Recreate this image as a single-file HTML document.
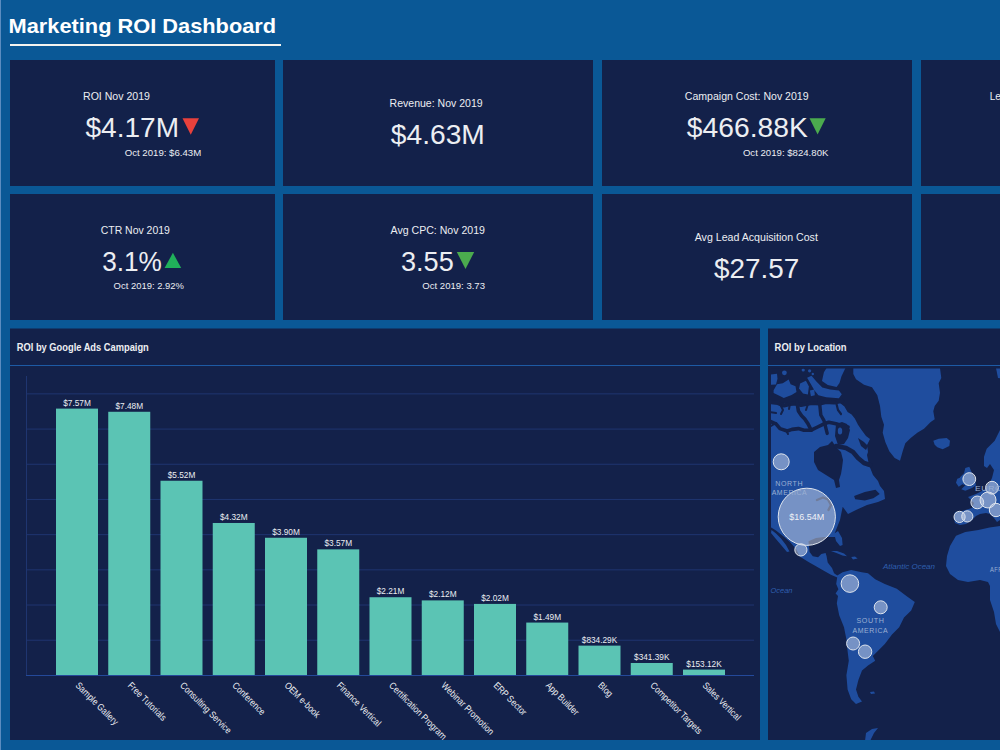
<!DOCTYPE html>
<html><head><meta charset="utf-8"><style>
html,body{margin:0;padding:0;background:#0a5896;width:1000px;height:750px;overflow:hidden}
svg{display:block}
text{font-family:"Liberation Sans",sans-serif}
</style></head><body>
<svg width="1000" height="750" viewBox="0 0 1000 750">
<rect x="0" y="0" width="1000" height="750" fill="#0a5896"/>
<rect x="0" y="0" width="1" height="750" fill="#5b8cc0"/>
<text x="8.6" y="33" font-size="21" textLength="267.5" lengthAdjust="spacingAndGlyphs" font-weight="bold" fill="#ffffff">Marketing ROI Dashboard</text>
<rect x="10" y="44" width="271" height="2" fill="#f4f4f0"/>
<rect x="10" y="60" width="265" height="126" fill="#13214a"/>
<rect x="283" y="60" width="310" height="126" fill="#13214a"/>
<rect x="602" y="60" width="310" height="126" fill="#13214a"/>
<rect x="921" y="60" width="89" height="126" fill="#13214a"/>
<rect x="10" y="194" width="265" height="126" fill="#13214a"/>
<rect x="283" y="194" width="310" height="126" fill="#13214a"/>
<rect x="602" y="194" width="310" height="126" fill="#13214a"/>
<rect x="921" y="194" width="89" height="126" fill="#13214a"/>
<rect x="10" y="328.5" width="750" height="411.5" fill="#13214a"/>
<rect x="768" y="328.5" width="240" height="411.5" fill="#13214a"/>
<text x="83" y="99.8" font-size="10" textLength="67" lengthAdjust="spacingAndGlyphs" fill="#eceef2">ROI Nov 2019</text>
<text x="85.5" y="137.3" font-size="28.5" textLength="93.5" lengthAdjust="spacingAndGlyphs" fill="#eceef2">$4.17M</text>
<polygon points="182.5,118.3 199.0,118.3 190.75,134.8" fill="#e8413c"/>
<text x="124.7" y="155.7" font-size="9.6" textLength="76.5" lengthAdjust="spacingAndGlyphs" fill="#eceef2">Oct 2019: $6.43M</text>
<text x="389.6" y="107" font-size="10" textLength="93" lengthAdjust="spacingAndGlyphs" fill="#eceef2">Revenue: Nov 2019</text>
<text x="390.8" y="143.8" font-size="28.5" textLength="94" lengthAdjust="spacingAndGlyphs" fill="#eceef2">$4.63M</text>
<text x="684.8" y="99.8" font-size="10" textLength="123.8" lengthAdjust="spacingAndGlyphs" fill="#eceef2">Campaign Cost: Nov 2019</text>
<text x="686.8" y="136.7" font-size="28.5" textLength="121" lengthAdjust="spacingAndGlyphs" fill="#eceef2">$466.88K</text>
<polygon points="809.5,118.3 825.7,118.3 817.6,134.5" fill="#4bab4e"/>
<text x="742.9" y="155.6" font-size="9.6" textLength="85.5" lengthAdjust="spacingAndGlyphs" fill="#eceef2">Oct 2019: $824.80K</text>
<text x="989.8" y="100.2" font-size="10" fill="#eceef2">Lead</text>
<text x="100.7" y="233.6" font-size="10" textLength="69.2" lengthAdjust="spacingAndGlyphs" fill="#eceef2">CTR Nov 2019</text>
<text x="102.2" y="271.3" font-size="28.5" textLength="59.7" lengthAdjust="spacingAndGlyphs" fill="#eceef2">3.1%</text>
<polygon points="164.6,268.0 181.2,268.0 172.9,252.8" fill="#20b05a"/>
<text x="113.6" y="289.2" font-size="9.6" textLength="70.3" lengthAdjust="spacingAndGlyphs" fill="#eceef2">Oct 2019: 2.92%</text>
<text x="390.6" y="234" font-size="10" textLength="94.4" lengthAdjust="spacingAndGlyphs" fill="#eceef2">Avg CPC: Nov 2019</text>
<text x="401" y="271.2" font-size="28.5" textLength="52.8" lengthAdjust="spacingAndGlyphs" fill="#eceef2">3.55</text>
<polygon points="456.8,252 474.2,252 465.5,269" fill="#4bab4e"/>
<text x="422.3" y="289.4" font-size="9.6" textLength="62.7" lengthAdjust="spacingAndGlyphs" fill="#eceef2">Oct 2019: 3.73</text>
<text x="694.7" y="241.1" font-size="10" textLength="123.2" lengthAdjust="spacingAndGlyphs" fill="#eceef2">Avg Lead Acquisition Cost</text>
<text x="714" y="277.9" font-size="28.5" textLength="85.2" lengthAdjust="spacingAndGlyphs" fill="#eceef2">$27.57</text>
<text x="16.8" y="351" font-size="10.5" textLength="132" lengthAdjust="spacingAndGlyphs" font-weight="bold" fill="#eceef2">ROI by Google Ads Campaign</text>
<rect x="10" y="365" width="750" height="1" fill="#1d5aa5"/>
<rect x="26" y="639.71" width="728" height="1" fill="#1f3570"/>
<rect x="26" y="604.52" width="728" height="1" fill="#1f3570"/>
<rect x="26" y="569.33" width="728" height="1" fill="#1f3570"/>
<rect x="26" y="534.14" width="728" height="1" fill="#1f3570"/>
<rect x="26" y="498.95" width="728" height="1" fill="#1f3570"/>
<rect x="26" y="463.76" width="728" height="1" fill="#1f3570"/>
<rect x="26" y="428.57" width="728" height="1" fill="#1f3570"/>
<rect x="26" y="393.38" width="728" height="1" fill="#1f3570"/>
<rect x="26" y="376" width="1" height="299" fill="#1f3570"/>
<rect x="26" y="675" width="728" height="1" fill="#24499a"/>
<rect x="56.00" y="408.61" width="42" height="266.39" fill="#5bc4b4"/>
<text x="77.00" y="405.61" font-size="9.5" textLength="27.6" lengthAdjust="spacingAndGlyphs" text-anchor="middle" fill="#eceef2">$7.57M</text>
<text transform="translate(75.00,686) rotate(45)" x="0" y="0" font-size="9.5" fill="#eceef2" textLength="55.9" lengthAdjust="spacingAndGlyphs">Sample Gallery</text>
<rect x="108.25" y="411.78" width="42" height="263.22" fill="#5bc4b4"/>
<text x="129.25" y="408.78" font-size="9.5" textLength="27.6" lengthAdjust="spacingAndGlyphs" text-anchor="middle" fill="#eceef2">$7.48M</text>
<text transform="translate(127.25,686) rotate(45)" x="0" y="0" font-size="9.5" fill="#eceef2" textLength="49.9" lengthAdjust="spacingAndGlyphs">Free Tutorials</text>
<rect x="160.50" y="480.75" width="42" height="194.25" fill="#5bc4b4"/>
<text x="181.50" y="477.75" font-size="9.5" textLength="27.6" lengthAdjust="spacingAndGlyphs" text-anchor="middle" fill="#eceef2">$5.52M</text>
<text transform="translate(179.50,686) rotate(45)" x="0" y="0" font-size="9.5" fill="#eceef2" textLength="68.1" lengthAdjust="spacingAndGlyphs">Consulting Service</text>
<rect x="212.75" y="522.98" width="42" height="152.02" fill="#5bc4b4"/>
<text x="233.75" y="519.98" font-size="9.5" textLength="27.6" lengthAdjust="spacingAndGlyphs" text-anchor="middle" fill="#eceef2">$4.32M</text>
<text transform="translate(231.75,686) rotate(45)" x="0" y="0" font-size="9.5" fill="#eceef2" textLength="42.2" lengthAdjust="spacingAndGlyphs">Conference</text>
<rect x="265.00" y="537.76" width="42" height="137.24" fill="#5bc4b4"/>
<text x="286.00" y="534.76" font-size="9.5" textLength="27.6" lengthAdjust="spacingAndGlyphs" text-anchor="middle" fill="#eceef2">$3.90M</text>
<text transform="translate(284.00,686) rotate(45)" x="0" y="0" font-size="9.5" fill="#eceef2" textLength="45.9" lengthAdjust="spacingAndGlyphs">OEM e-book</text>
<rect x="317.25" y="549.37" width="42" height="125.63" fill="#5bc4b4"/>
<text x="338.25" y="546.37" font-size="9.5" textLength="27.6" lengthAdjust="spacingAndGlyphs" text-anchor="middle" fill="#eceef2">$3.57M</text>
<text transform="translate(336.25,686) rotate(45)" x="0" y="0" font-size="9.5" fill="#eceef2" textLength="58.1" lengthAdjust="spacingAndGlyphs">Finance Vertical</text>
<rect x="369.50" y="597.23" width="42" height="77.77" fill="#5bc4b4"/>
<text x="390.50" y="594.23" font-size="9.5" textLength="27.6" lengthAdjust="spacingAndGlyphs" text-anchor="middle" fill="#eceef2">$2.21M</text>
<text transform="translate(388.50,686) rotate(45)" x="0" y="0" font-size="9.5" fill="#eceef2" textLength="76.7" lengthAdjust="spacingAndGlyphs">Certification Program</text>
<rect x="421.75" y="600.40" width="42" height="74.60" fill="#5bc4b4"/>
<text x="442.75" y="597.40" font-size="9.5" textLength="27.6" lengthAdjust="spacingAndGlyphs" text-anchor="middle" fill="#eceef2">$2.12M</text>
<text transform="translate(440.75,686) rotate(45)" x="0" y="0" font-size="9.5" fill="#eceef2" textLength="69.8" lengthAdjust="spacingAndGlyphs">Webinar Promotion</text>
<rect x="474.00" y="603.92" width="42" height="71.08" fill="#5bc4b4"/>
<text x="495.00" y="600.92" font-size="9.5" textLength="27.6" lengthAdjust="spacingAndGlyphs" text-anchor="middle" fill="#eceef2">$2.02M</text>
<text transform="translate(493.00,686) rotate(45)" x="0" y="0" font-size="9.5" fill="#eceef2" textLength="42.5" lengthAdjust="spacingAndGlyphs">ERP Sector</text>
<rect x="526.25" y="622.57" width="42" height="52.43" fill="#5bc4b4"/>
<text x="547.25" y="619.57" font-size="9.5" textLength="27.6" lengthAdjust="spacingAndGlyphs" text-anchor="middle" fill="#eceef2">$1.49M</text>
<text transform="translate(545.25,686) rotate(45)" x="0" y="0" font-size="9.5" fill="#eceef2" textLength="42.2" lengthAdjust="spacingAndGlyphs">App Builder</text>
<rect x="578.50" y="645.64" width="42" height="29.36" fill="#5bc4b4"/>
<text x="599.50" y="642.64" font-size="9.5" textLength="35.4" lengthAdjust="spacingAndGlyphs" text-anchor="middle" fill="#eceef2">$834.29K</text>
<text transform="translate(597.50,686) rotate(45)" x="0" y="0" font-size="9.5" fill="#eceef2" textLength="16.4" lengthAdjust="spacingAndGlyphs">Blog</text>
<rect x="630.75" y="662.99" width="42" height="12.01" fill="#5bc4b4"/>
<text x="651.75" y="659.99" font-size="9.5" textLength="35.4" lengthAdjust="spacingAndGlyphs" text-anchor="middle" fill="#eceef2">$341.39K</text>
<text transform="translate(649.75,686) rotate(45)" x="0" y="0" font-size="9.5" fill="#eceef2" textLength="68.9" lengthAdjust="spacingAndGlyphs">Competitor Targets</text>
<rect x="683.00" y="669.61" width="42" height="5.39" fill="#5bc4b4"/>
<text x="704.00" y="666.61" font-size="9.5" textLength="35.4" lengthAdjust="spacingAndGlyphs" text-anchor="middle" fill="#eceef2">$153.12K</text>
<text transform="translate(702.00,686) rotate(45)" x="0" y="0" font-size="9.5" fill="#eceef2" textLength="49.5" lengthAdjust="spacingAndGlyphs">Sales Vertical</text>
<text x="774.6" y="351" font-size="10.5" textLength="72" lengthAdjust="spacingAndGlyphs" font-weight="bold" fill="#eceef2">ROI by Location</text>
<rect x="768" y="365" width="240" height="1" fill="#1d5aa5"/>
<clipPath id="mc"><rect x="771" y="368.5" width="240" height="371.5"/></clipPath>
<g clip-path="url(#mc)">
<rect x="771" y="368.5" width="240" height="372" fill="#13214a"/>
<polygon points="770.0,403.0 840.0,403.0 844.4,406.4 847.6,412.0 851.6,414.4 854.8,418.4 858.0,424.8 861.2,429.6 866.0,436.0 870.0,439.0 867.0,445.0 868.0,452.0 867.0,455.0 869.0,465.0 873.0,475.0 878.0,481.0 880.0,486.0 884.0,491.0 885.0,499.0 878.0,502.0 867.0,505.0 856.0,510.0 848.0,514.0 842.7,506.7 840.0,520.0 834.7,533.3 838.0,531.0 842.0,538.0 842.6,545.0 840.0,546.0 836.0,541.0 835.0,537.0 832.0,537.1 824.5,537.1 816.0,538.1 808.5,541.3 809.6,552.0 812.8,556.2 818.1,557.3 821.3,554.1 825.6,553.0 826.6,556.2 827.7,562.6 832.0,568.0 834.1,573.3 837.3,575.4 841.6,577.6 837.3,577.5 830.9,574.8 823.4,570.5 816.0,566.3 808.5,562.0 800.0,556.7 796.0,549.0 790.0,542.0 783.0,536.0 776.0,530.5 771.2,527.5 770.0,527.5" fill="#1f4d9e"/>
<circle cx="784.4" cy="372.8" r="2.4" fill="#1f4d9e"/>
<circle cx="803.2" cy="370" r="1.6" fill="#1f4d9e"/>
<circle cx="809.6" cy="370.8" r="1.6" fill="#1f4d9e"/>
<circle cx="812.8" cy="374" r="1.2" fill="#1f4d9e"/>
<polygon points="769.2,374.8 777.0,373.8 777.5,378.7 776.0,384.5 769.2,385.0" fill="#1f4d9e"/>
<polygon points="773.6,390.2 777.0,384.3 782.8,383.3 788.7,379.4 790.6,384.3 795.5,386.3 796.5,392.1 791.6,395.0 783.8,398.0 779.9,396.0 773.6,393.1" fill="#1f4d9e"/>
<polygon points="800.1,383.6 805.9,380.7 808.9,386.6 807.9,394.4 803.0,393.4 799.1,388.5" fill="#1f4d9e"/>
<polygon points="809.9,390.4 814.3,389.4 814.8,395.2 810.9,396.2" fill="#1f4d9e"/>
<polygon points="807.1,377.7 811.5,375.7 816.4,381.6 822.3,387.4 830.1,389.4 838.9,390.4 841.8,394.3 838.9,398.2 826.2,397.2 818.4,395.2 814.5,390.4 810.5,383.5" fill="#1f4d9e"/>
<polygon points="822.0,381.1 823.9,372.3 827.8,366.0 846.4,366.0 841.5,376.2 839.5,383.1 836.6,387.0 827.8,385.0" fill="#1f4d9e"/>
<polyline points="770.0,421.4 776.0,423.8 780.0,428.6 787.2,431.0 792.0,429.4 798.4,428.6 804.0,430.2 811.2,430.2 817.6,427.0 824.0,423.8 828.8,422.2 836.0,423.8 841.6,425.4 848.0,427.0" fill="none" stroke="#13214a" stroke-width="3.6" stroke-linejoin="round" stroke-linecap="round"/>
<polyline points="770.0,402.0 778.0,403.0 784.0,405.5 790.0,404.0 796.0,403.5 801.0,405.0 806.0,404.0 812.0,403.0 820.0,403.5 826.0,402.0 834.0,402.5 842.0,401.0" fill="none" stroke="#13214a" stroke-width="4.2" stroke-linejoin="round" stroke-linecap="round"/>
<polyline points="796.8,401.0 798.4,411.0 801.6,415.8 804.8,419.0 808.0,423.8 811.2,430.2" fill="none" stroke="#13214a" stroke-width="3.6" stroke-linejoin="round" stroke-linecap="round"/>
<polyline points="819.2,399.8 820.0,407.0 820.8,415.0 824.0,420.6 825.6,427.0 827.2,433.4" fill="none" stroke="#13214a" stroke-width="3.4" stroke-linejoin="round" stroke-linecap="round"/>
<polyline points="780.0,404.0 783.0,410.0 781.0,414.0" fill="none" stroke="#13214a" stroke-width="2" stroke-linejoin="round" stroke-linecap="round"/>
<polyline points="790.0,404.0 789.0,409.0" fill="none" stroke="#13214a" stroke-width="2" stroke-linejoin="round" stroke-linecap="round"/>
<polyline points="776.0,423.0 771.0,426.0" fill="none" stroke="#13214a" stroke-width="2" stroke-linejoin="round" stroke-linecap="round"/>
<polyline points="786.0,430.0 788.0,434.0" fill="none" stroke="#13214a" stroke-width="2" stroke-linejoin="round" stroke-linecap="round"/>
<polyline points="808.0,404.0 806.0,410.0" fill="none" stroke="#13214a" stroke-width="2" stroke-linejoin="round" stroke-linecap="round"/>
<polyline points="836.0,402.0 838.0,410.0 841.0,414.0" fill="none" stroke="#13214a" stroke-width="2.2" stroke-linejoin="round" stroke-linecap="round"/>
<polyline points="770.0,412.0 776.0,413.0" fill="none" stroke="#13214a" stroke-width="2" stroke-linejoin="round" stroke-linecap="round"/>
<polygon points="836.0,424.0 842.0,422.0 847.0,424.0 850.0,430.0 848.0,438.0 844.0,444.0 838.0,445.0 835.0,436.0" fill="#13214a"/>
<ellipse cx="840" cy="431" rx="2.2" ry="3.5" fill="#1f4d9e"/>
<polygon points="814.0,452.0 820.0,447.0 828.0,445.0 832.0,441.0 836.0,447.0 841.0,452.0 843.0,460.0 842.0,468.0 841.0,474.0 839.0,480.0 840.0,487.0 836.0,488.0 834.0,480.0 826.0,475.0 818.0,470.0 814.0,462.0" fill="#13214a"/>
<polyline points="836.0,446.0 846.0,448.0 853.0,452.0 858.0,458.0 864.0,463.0 870.0,465.0" fill="none" stroke="#13214a" stroke-width="4.5" stroke-linejoin="round" stroke-linecap="round"/>
<polygon points="858.0,438.0 864.0,442.0 868.0,446.0 866.0,450.0 861.0,446.0" fill="#13214a"/>
<polygon points="854.1,496.1 864.8,491.9 875.5,489.7 879.7,494.0 873.3,498.3 864.8,500.4 855.2,499.3" fill="#13214a"/>
<polyline points="817.0,500.0 823.0,497.5 828.0,499.5 831.0,505.0 828.5,510.0" fill="none" stroke="#13214a" stroke-width="2.4" stroke-linejoin="round" stroke-linecap="round"/>
<polygon points="853.3,368.0 940.0,368.0 941.3,378.0 938.7,383.3 940.0,392.7 938.7,400.7 934.7,406.0 933.3,411.3 934.7,419.3 930.7,422.0 924.0,428.7 917.3,432.7 910.7,438.0 905.3,443.3 902.7,451.3 900.0,460.7 894.7,458.0 889.3,451.3 885.3,442.0 882.7,432.7 884.0,424.7 881.3,416.7 880.0,406.0 877.3,395.3 872.0,387.3 864.0,384.7 856.0,379.3 853.3,374.0" fill="#1f4d9e"/>
<polygon points="933.3,440.7 938.7,438.7 946.7,438.0 950.0,440.7 949.3,446.0 942.7,449.3 937.3,447.3 934.7,444.7" fill="#1f4d9e"/>
<polygon points="830.9,550.9 837.0,550.9 844.0,553.5 847.0,556.2 842.5,555.5 836.5,553.0" fill="#1f4d9e"/>
<polygon points="851.2,557.0 855.0,556.4 857.6,558.4 853.0,559.4" fill="#1f4d9e"/>
<polygon points="771.5,530.0 776.0,533.5 781.0,538.5 786.0,545.0 789.5,551.5 787.0,552.0 781.5,545.5 775.5,538.5 771.0,533.0" fill="#1f4d9e"/>
<polygon points="837.3,575.4 842.6,572.2 851.2,570.1 861.8,572.2 868.0,573.3 875.2,579.2 884.8,584.0 896.8,588.8 906.4,596.0 914.8,602.0 911.2,610.4 904.0,617.6 899.2,627.2 892.0,634.4 884.8,644.0 877.6,651.2 872.8,656.0 875.2,660.8 868.0,665.6 862.0,670.4 858.4,680.0 856.0,689.6 858.4,696.8 862.0,701.6 856.0,704.0 851.2,699.2 847.6,689.6 846.4,675.2 848.8,660.8 847.6,651.2 846.4,639.2 844.0,627.2 839.2,615.2 836.8,603.2 838.0,596.0 835.6,593.6 838.4,589.3 836.2,584.0 837.3,576.5" fill="#1f4d9e"/>
<polygon points="866.0,733.0 872.0,729.0 878.0,728.0 874.0,733.0 870.0,741.0 865.0,741.0" fill="#1f4d9e"/>
<polygon points="870.0,692.0 874.0,691.5 875.0,693.5 871.0,694.0" fill="#1f4d9e"/>
<polygon points="996.0,368.0 1010.0,368.0 1010.0,380.0 998.0,378.0" fill="#1f4d9e"/>
<polygon points="1010.0,425.0 1000.0,430.0 994.7,440.7 986.7,448.7 984.0,456.7 984.0,466.0 987.0,468.0 990.0,464.0 994.0,470.0 1010.0,470.0" fill="#1f4d9e"/>
<polygon points="965.3,468.0 969.3,466.7 972.0,473.3 974.7,478.7 976.0,485.3 972.0,488.0 965.3,490.7 961.3,489.3 965.3,485.3 958.7,482.7 960.0,477.3 964.0,473.3" fill="#1f4d9e"/>
<polygon points="957.3,478.7 961.3,477.3 962.7,484.0 958.7,486.7 956.0,482.7" fill="#1f4d9e"/>
<polygon points="1010.0,468.0 994.0,470.0 992.0,478.0 990.0,482.0 984.0,490.0 976.0,494.0 968.0,497.0 974.0,503.0 972.0,508.0 962.0,511.0 955.0,512.0 954.0,518.0 955.0,523.0 960.0,525.0 966.0,524.0 972.0,520.0 976.0,516.0 980.0,514.0 986.0,513.0 990.0,514.0 994.0,518.0 997.0,522.0 1000.0,520.0 1003.0,516.0 1010.0,514.0" fill="#1f4d9e"/>
<polygon points="1010.0,525.0 1000.0,526.0 989.6,527.5 978.4,530.0 965.3,532.0 956.0,535.7 950.0,546.0 947.0,556.0 946.0,566.0 950.0,574.0 958.0,580.0 968.0,582.0 980.0,580.0 988.0,582.0 990.0,586.0 990.0,600.0 994.0,612.0 996.0,624.0 1000.0,632.0 1010.0,640.0" fill="#1f4d9e"/>
</g>
<circle cx="781.2" cy="461.8" r="8" fill="rgba(205,215,235,0.5)" stroke="#dfe5ee" stroke-width="1"/>
<circle cx="806.8" cy="516.8" r="28.6" fill="rgba(205,215,235,0.5)" stroke="#dfe5ee" stroke-width="1"/>
<circle cx="800.9" cy="549.9" r="6.1" fill="rgba(205,215,235,0.5)" stroke="#dfe5ee" stroke-width="1"/>
<circle cx="849.9" cy="583.6" r="8.8" fill="rgba(205,215,235,0.5)" stroke="#dfe5ee" stroke-width="1"/>
<circle cx="880.7" cy="607.3" r="6.5" fill="rgba(205,215,235,0.5)" stroke="#dfe5ee" stroke-width="1"/>
<circle cx="853.1" cy="643.5" r="6.5" fill="rgba(205,215,235,0.5)" stroke="#dfe5ee" stroke-width="1"/>
<circle cx="865.1" cy="651.7" r="6.7" fill="rgba(205,215,235,0.5)" stroke="#dfe5ee" stroke-width="1"/>
<circle cx="969.3" cy="479.1" r="6.4" fill="rgba(205,215,235,0.5)" stroke="#dfe5ee" stroke-width="1"/>
<circle cx="959.6" cy="516.9" r="5.6" fill="rgba(205,215,235,0.5)" stroke="#dfe5ee" stroke-width="1"/>
<circle cx="967.3" cy="516.4" r="5.6" fill="rgba(205,215,235,0.5)" stroke="#dfe5ee" stroke-width="1"/>
<circle cx="977.3" cy="502.4" r="6.4" fill="rgba(205,215,235,0.5)" stroke="#dfe5ee" stroke-width="1"/>
<circle cx="988" cy="500" r="8" fill="rgba(205,215,235,0.5)" stroke="#dfe5ee" stroke-width="1"/>
<circle cx="992" cy="487.7" r="6.4" fill="rgba(205,215,235,0.5)" stroke="#dfe5ee" stroke-width="1"/>
<circle cx="996" cy="510" r="6.7" fill="rgba(205,215,235,0.5)" stroke="#dfe5ee" stroke-width="1"/>
<text x="789.2" y="485.8" fill="#9bb0d3" font-size="7.2" letter-spacing="0.6" text-anchor="middle" textLength="28" lengthAdjust="spacingAndGlyphs">NORTH</text>
<text x="789.5" y="495" fill="#9bb0d3" font-size="7.2" letter-spacing="0.6" text-anchor="middle" textLength="35.7" lengthAdjust="spacingAndGlyphs">AMERICA</text>
<text x="870.4" y="623.2" fill="#9bb0d3" font-size="7.2" letter-spacing="0.6" text-anchor="middle" textLength="28" lengthAdjust="spacingAndGlyphs">SOUTH</text>
<text x="870.4" y="632.6" fill="#9bb0d3" font-size="7.2" letter-spacing="0.6" text-anchor="middle" textLength="35.7" lengthAdjust="spacingAndGlyphs">AMERICA</text>
<text x="975" y="490.7" fill="#9bb0d3" font-size="7.2" letter-spacing="0.6" textLength="40" lengthAdjust="spacingAndGlyphs">EUROPE</text>
<text x="990" y="572" fill="#9bb0d3" font-size="7.2" letter-spacing="0.6" textLength="24" lengthAdjust="spacingAndGlyphs">AFRICA</text>
<text x="806.8" y="520" fill="#eef1f5" font-size="9.4" text-anchor="middle" textLength="35" lengthAdjust="spacingAndGlyphs">$16.54M</text>
<text x="883" y="569" fill="#2f5fae" font-size="7.5" font-style="italic" textLength="52" lengthAdjust="spacingAndGlyphs">Atlantic Ocean</text>
<text x="770.5" y="593" fill="#2f5fae" font-size="7.5" font-style="italic" textLength="22" lengthAdjust="spacingAndGlyphs">Ocean</text>
</svg>
</body></html>
